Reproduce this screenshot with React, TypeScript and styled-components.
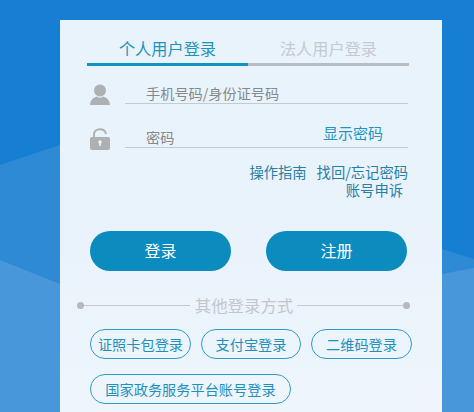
import styled, { createGlobalStyle } from 'styled-components'

const GlobalStyle = createGlobalStyle`
	html, body {
		margin: 0;
		padding: 0;
		background: #167fd3;
		font-family: "Noto Sans CJK SC", "Liberation Sans", sans-serif;
	}
`

const Page = styled.div`
	position: relative;
	width: 474px;
	height: 412px;
	overflow: hidden;
	background: #167fd3;
`
const Backdrop = styled.svg`
	position: absolute;
	inset: 0;
`
const Panel = styled.div`
	position: relative;
	box-sizing: border-box;
	width: 382px;
	height: 420px;
	margin-left: 60px;
	top: 20px;
	padding: 17px 33px 0 27px;
	background: linear-gradient(180deg, #e8f3fb 0%, #eaf3fb 55%, #eff6fc 100%);
`
const Tabs = styled.div`
	display: flex;
`
const Tab = styled.div<{ $active?: boolean }>`
	flex: 1;
	height: 29px;
	box-sizing: border-box;
	padding-bottom: 3px;
	border-bottom: 3px solid ${p => (p.$active ? '#1192c2' : '#b9bdc0')};
	color: ${p => (p.$active ? '#1f93bc' : '#c6cace')};
	font-size: 16.2px;
	line-height: 23px;
	text-align: center;
`
const Field = styled.div<{ $first?: boolean }>`
	display: flex;
	align-items: flex-end;
	height: ${p => (p.$first ? '38px' : '44px')};
	padding-left: 3px;
`
const FieldIcon = styled.svg`
	width: 20px;
	height: 22px;
	margin-right: 15px;
	margin-bottom: -2px;
	flex: none;
`
const FieldBody = styled.div`
	flex: 1;
	display: flex;
	justify-content: space-between;
	margin-right: 1px;
	height: 20px;
	padding: 0 25px 0 21px;
	border-bottom: 1px solid #c2cbd2;
`
const Placeholder = styled.span`
	color: #86898c;
	font-size: 14.2px;
	line-height: 20px;
`
const ShowPassword = styled.span`
	color: #2593bf;
	font-size: 15px;
	line-height: 20px;
	position: relative;
	top: -4px;
`
const Links = styled.div`
	display: flex;
	justify-content: flex-end;
	gap: 10px;
	margin-top: 15px;
	margin-right: 1px;
`
const HelpLink = styled.a`
	display: block;
	color: #267ea5;
	font-size: 14.3px;
	line-height: 18px;
	text-decoration: none;
`
const RecoverColumn = styled.div`
	display: flex;
	flex-direction: column;
	align-items: flex-end;
`
const Appeal = styled(HelpLink)`
	margin-right: 5px;
`
const Actions = styled.div`
	display: flex;
	justify-content: space-between;
	margin: 32px 2px 0 3px;
`
const MainButton = styled.button`
	width: 141px;
	height: 40px;
	padding: 0 0 2px;
	border: 0;
	border-radius: 20px;
	background: #0c8bbf;
	color: #fff;
	font: inherit;
	font-size: 16px;
`
const Divider = styled.div`
	display: flex;
	align-items: center;
	margin: 23px 0 0 -10px;
	width: 333px;
	color: #c3c7cb;
	font-size: 16.4px;
	line-height: 22px;
`
const Dot = styled.span`
	width: 7px;
	height: 7px;
	border-radius: 50%;
	background: #b5b9bd;
	flex: none;
`
const Rule = styled.span`
	flex: 1;
	height: 1px;
	background: #c5cbd0;
`
const DividerLabel = styled.span`
	margin: 0 4px 0 5px;
`
const Methods = styled.div`
	display: flex;
	flex-wrap: wrap;
	gap: 15px 10px;
	margin: 13px -5px 0 3px;
`
const Pill = styled.button<{ $width: number }>`
	box-sizing: border-box;
	width: ${p => p.$width}px;
	height: 30px;
	padding: 0;
	border: 1px solid #2f9ac4;
	border-radius: 15px;
	background: transparent;
	color: #1f90ba;
	font: inherit;
	font-size: 14.2px;
	line-height: 28px;
`

const UserIcon = () => (
	<FieldIcon viewBox="0 0 20 22">
		<circle cx="10" cy="6.5" r="6" fill="#aeb0b2" />
		<path d="M0 21 C0.5 15 4 13.5 6.5 12.5 C8.5 14 11.5 14 13.5 12.5 C16 13.5 19.5 15 20 21 Z" fill="#aeb0b2" />
	</FieldIcon>
)

const LockIcon = () => (
	<FieldIcon viewBox="0 0 20 22">
		<path d="M4 9 V6.5 C4 3 6.8 1.2 10 1.2 C13.2 1.2 15.5 3 16 6" fill="none" stroke="#aeb0b2" strokeWidth="2" />
		<rect x="0" y="9" width="20" height="13" rx="2" fill="#aeb0b2" />
		<circle cx="10" cy="14" r="1.8" fill="#f0f4f8" />
		<rect x="9.2" y="14" width="1.6" height="4" fill="#f0f4f8" />
	</FieldIcon>
)

const methods = [
	{ label: '证照卡包登录', width: 101 },
	{ label: '支付宝登录', width: 100 },
	{ label: '二维码登录', width: 101 },
	{ label: '国家政务服务平台账号登录', width: 201 },
]

const App = () => (
	<>
		<GlobalStyle />
		<Page>
			<Backdrop width="474" height="412" viewBox="0 0 474 412">
				<path d="M0 165 L60 145 L442 249 L474 259 L474 412 L0 412 Z" fill="#2f8ad6" />
				<path d="M0 260 L60 284 L442 274 L474 268 L474 412 L0 412 Z" fill="#4797da" />
			</Backdrop>
			<Panel>
				<Tabs>
					<Tab $active>个人用户登录</Tab>
					<Tab>法人用户登录</Tab>
				</Tabs>
				<Field $first>
					<UserIcon />
					<FieldBody>
						<Placeholder>手机号码/身份证号码</Placeholder>
					</FieldBody>
				</Field>
				<Field>
					<LockIcon />
					<FieldBody>
						<Placeholder>密码</Placeholder>
						<ShowPassword>显示密码</ShowPassword>
					</FieldBody>
				</Field>
				<Links>
					<HelpLink>操作指南</HelpLink>
					<RecoverColumn>
						<HelpLink>找回/忘记密码</HelpLink>
						<Appeal>账号申诉</Appeal>
					</RecoverColumn>
				</Links>
				<Actions>
					<MainButton>登录</MainButton>
					<MainButton>注册</MainButton>
				</Actions>
				<Divider>
					<Dot />
					<Rule />
					<DividerLabel>其他登录方式</DividerLabel>
					<Rule />
					<Dot />
				</Divider>
				<Methods>
					{methods.map(m => (
						<Pill key={m.label} $width={m.width}>{m.label}</Pill>
					))}
				</Methods>
			</Panel>
		</Page>
	</>
)

export default App
